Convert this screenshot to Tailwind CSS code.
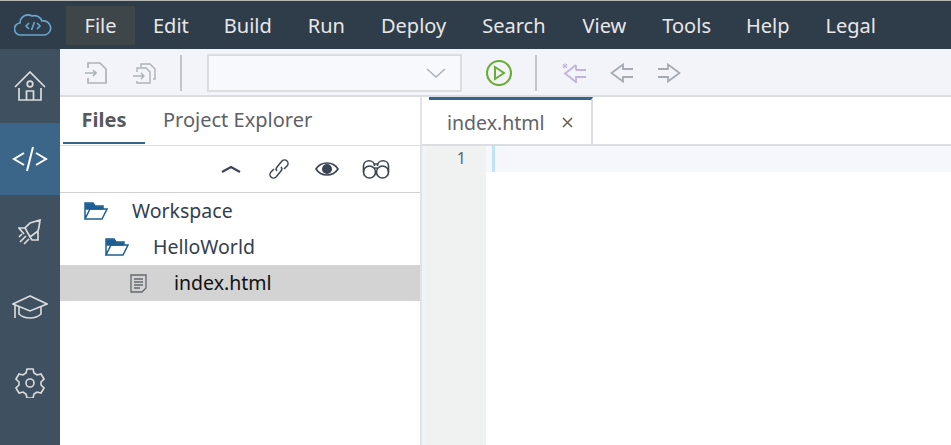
<!doctype html>
<html lang="en">
  <head>
    <meta charset="UTF-8" />
    <title>Web IDE</title>
    <script src="https://cdn.jsdelivr.net/npm/@tailwindcss/browser@4"></script>
  </head>
  <body class="h-[445px] w-[951px] overflow-hidden bg-white font-['Noto_Sans',sans-serif]">
    <div class="flex h-full flex-col">
      <header class="flex h-[49px] shrink-0 items-start border-t border-[#b5b5b5] bg-[#2f3c4a] text-[20px] text-[#e8e8e8]">
        <div class="flex h-[48px] w-[66px] items-center justify-center">
          <svg width="38" height="26" viewBox="0 0 38 26" fill="none" stroke="#6aa6d0" stroke-width="1.6">
            <path d="M9 23H7a6 6 0 0 1-1-12 8 8 0 0 1 12-7 8 8 0 0 1 10 5 7 7 0 0 1 3 14H9z" />
            <path d="M15 11l-3 3 3 3M23 11l3 3-3 3M20.500 10l-3 8" />
          </svg>
        </div>
        <nav class="flex items-start">
          <a class="mt-[5px] flex h-[39px] w-[69px] items-center justify-center bg-[#3e4649]">File</a>
          <a class="mt-[5px] flex h-[39px] items-center pl-[18px]">Edit</a>
          <a class="mt-[5px] flex h-[39px] items-center pl-[35px]">Build</a>
          <a class="mt-[5px] flex h-[39px] items-center pl-[36px]">Run</a>
          <a class="mt-[5px] flex h-[39px] items-center pl-[36px]">Deploy</a>
          <a class="mt-[5px] flex h-[39px] items-center pl-[36px]">Search</a>
          <a class="mt-[5px] flex h-[39px] items-center pl-[37px]">View</a>
          <a class="mt-[5px] flex h-[39px] items-center pl-[36px]">Tools</a>
          <a class="mt-[5px] flex h-[39px] items-center pl-[35px]">Help</a>
          <a class="mt-[5px] flex h-[39px] items-center pl-[36px]">Legal</a>
        </nav>
      </header>
      <div class="flex min-h-0 flex-1">
        <aside class="flex w-[60px] shrink-0 flex-col bg-[#3f5161]">
          <div class="flex h-[74px] items-center justify-center">
            <svg width="32" height="30" viewBox="0 0 32 30" fill="none" stroke="#dcdcdc" stroke-width="1.700">
              <path d="M1 16 16 1l15 15M5 17v12h22V17" />
              <circle cx="16" cy="13" r="2.800" />
              <path d="M12.500 29V20h7v9" />
            </svg>
          </div>
          <div class="flex h-[72px] items-center justify-center bg-[#3c6689]">
            <svg width="36" height="26" viewBox="0 0 36 26" fill="none" stroke="#fff" stroke-width="2">
              <path d="M12 7 2 13l10 6M24 7l10 6-10 6M21 1l-6 24" />
            </svg>
          </div>
          <div class="flex h-[74px] items-center justify-center">
            <svg width="24" height="26" viewBox="0 0 24 26" fill="none" stroke="#dcdcdc" stroke-width="1.700">
              <path d="M22 1 12 4 7 9l5 9 8-6 1-4zM7 9H1l5 6M20 12v9h-6l-2-3M2 23l6-6M6 25l5-5M1 18l3-3" />
            </svg>
          </div>
          <div class="flex h-[76px] items-center justify-center">
            <svg width="36" height="26" viewBox="0 0 36 26" fill="none" stroke="#dcdcdc" stroke-width="1.600">
              <path d="M18 2 1 10l17 7 17-7zM3 11v13M7 13v7c3 3 8 4 11 4s8-1 11-4v-7" />
            </svg>
          </div>
          <div class="flex h-[76px] items-center justify-center">
            <svg width="30" height="30" viewBox="0 0 30 30" fill="none" stroke="#dcdcdc" stroke-width="1.600">
              <path d="M12 1h6l1 4 3 2 4-1 3 5-3 3v3l3 3-3 5-4-1-3 2-1 4h-6l-1-4-3-2-4 1-3-5 3-3v-3L1 11l3-5 4 1 3-2z" />
              <circle cx="15" cy="15" r="4" />
            </svg>
          </div>
        </aside>
        <div class="flex min-w-0 flex-1 flex-col">
          <div class="flex h-[48px] shrink-0 items-center border-b-2 border-[#dcdde3] bg-[#f2f4f9] pt-[2px]">
            <svg class="ml-[25px]" width="22" height="22" viewBox="0 0 22 22" fill="none" stroke="#abb2b9" stroke-width="1.700">
              <path d="M3 6V1h12l6 6v14H3v-5M0 11h11M8 8l3 3-3 3" />
            </svg>
            <svg class="ml-[26px]" width="24" height="21" viewBox="0 0 24 21" fill="none" stroke="#abb2b9" stroke-width="1.400">
              <path d="M4 9V5h9l4 4v11H4v-2M8 4V1h9l5 5v10h-2M0 13h11M8 10l3 3-3 3" />
            </svg>
            <div class="ml-[23px] h-[36px] w-[2px] bg-[#c2c5c9]"></div>
            <div class="ml-[25px] flex h-[38px] w-[255px] items-center justify-end border-2 border-[#dcdde0] bg-[#f7f9fc] pr-[14px]">
              <svg width="20" height="10" viewBox="0 0 20 10" fill="none" stroke="#a9b2bb" stroke-width="1.500"><path d="m1 1 9 8 9-8" /></svg>
            </div>
            <svg class="ml-[24px]" width="26" height="26" viewBox="0 0 26 26" fill="none" stroke="#6cae34" stroke-width="2.200">
              <circle cx="13" cy="13" r="12" />
              <path d="M9 7v12l9-6z" stroke-width="2" />
            </svg>
            <div class="ml-[23px] h-[36px] w-[2px] bg-[#c2c5c9]"></div>
            <svg class="ml-[25px]" width="25" height="20" viewBox="0 0 25 20" fill="none" stroke="#c3b3d9" stroke-width="1.800">
              <path d="M14 2 3 10.500 14 19v-5h10M14 7h10M14 2v5M14 14v5" />
              <path d="M0.500 3h5M3 0.500v5M1 1l4 4M5 1 1 5" stroke-width="1" />
            </svg>
            <svg class="ml-[23px]" width="24" height="20" viewBox="0 0 24 20" fill="none" stroke="#a4abb2" stroke-width="1.800">
              <path d="M23 6H13V1.500L1.500 10 13 18.500V14h10" />
            </svg>
            <svg class="ml-[23px]" width="24" height="20" viewBox="0 0 24 20" fill="none" stroke="#a4abb2" stroke-width="1.800">
              <path d="M1 6h10V1.500L22.500 10 11 18.500V14H1" />
            </svg>
          </div>
          <div class="flex min-h-0 flex-1">
            <section class="flex w-[362px] shrink-0 flex-col border-r-2 border-[#e1e3ea] bg-white">
              <div class="flex h-[49px] items-stretch border-b border-[#dcdde3] pb-[2px] pl-[3px] text-[20px]">
                <div class="relative flex w-[82px] items-center justify-center font-bold text-[#56595d]">
                  Files
                  <div class="absolute right-0 -bottom-px left-0 h-[2px] bg-[#36648b]"></div>
                </div>
                <div class="flex items-center pl-[18px] text-[#5e6166]">Project Explorer</div>
              </div>
              <div class="flex h-[47px] items-center border-b border-[#d0d0d0]">
                <svg class="ml-[161px]" width="20" height="8" viewBox="0 0 20 8" fill="none" stroke="#3a4652" stroke-width="2.200"><path d="M1 7l9-5 9 5" /></svg>
                <svg class="ml-[27px]" width="22" height="22" viewBox="0 0 22 22" fill="none" stroke="#3a4652" stroke-width="1.500">
                  <path d="M9 13a3 3 0 0 1 0-4l5-6a3.500 3.500 0 0 1 5 5l-3 3" />
                  <path d="M13 9a3 3 0 0 1 0 4l-5 6a3.500 3.500 0 0 1-5-5l3-3" />
                </svg>
                <svg class="ml-[25px]" width="24" height="16" viewBox="0 0 24 16" fill="none" stroke="#3a4652" stroke-width="1.700">
                  <path d="M1 8c5-8 17-8 22 0-5 8-17 8-22 0z" />
                  <circle cx="12" cy="8" r="4.200" fill="#3a4652" />
                </svg>
                <svg class="ml-[23px]" width="28" height="20" viewBox="0 0 28 20" fill="none" stroke="#3a4652" stroke-width="1.600">
                  <circle cx="7.500" cy="13" r="6" />
                  <circle cx="20.500" cy="13" r="6" />
                  <path d="M1.500 13V7c0-7 11-7 11 0M26.500 13V7c0-7-11-7-11 0M12.500 5h3M12.500 9h3" />
                </svg>
              </div>
              <div class="flex h-[36px] items-center pl-[24px] text-[19.500px] text-[#32404e]">
                <svg width="24" height="18" viewBox="0 0 24 18" fill="none" stroke="#1d5f92" stroke-width="1.500">
                  <path d="M1 17V1h8l2 3h8v3H6L1 17h17l5-10h-5" />
                  <path d="M2 2h7l2 3h7v2H2z" fill="#1d5f92" />
                </svg>
                <span class="ml-[24px]">Workspace</span>
              </div>
              <div class="flex h-[36px] items-center pl-[45px] text-[19.500px] text-[#32404e]">
                <svg width="24" height="18" viewBox="0 0 24 18" fill="none" stroke="#1d5f92" stroke-width="1.500">
                  <path d="M1 17V1h8l2 3h8v3H6L1 17h17l5-10h-5" />
                  <path d="M2 2h7l2 3h7v2H2z" fill="#1d5f92" />
                </svg>
                <span class="ml-[24px]">HelloWorld</span>
              </div>
              <div class="flex h-[36px] items-center bg-[#d3d3d3] pl-[70px] text-[19.500px] text-[#111]">
                <svg width="17" height="19" viewBox="0 0 17 19" fill="none" stroke="#64686d" stroke-width="1.300">
                  <path d="M1 1h15v13l-4 4H1zM4 5h9M4 8h9M4 11h9M4 14h6" />
                </svg>
                <span class="ml-[27px]">index.html</span>
              </div>
            </section>
            <section class="flex min-w-0 flex-1 flex-col">
              <div class="flex h-[49px] shrink-0 border-b-2 border-[#dcdde3] pl-[7px]">
                <div class="flex w-[164px] items-center border-t-[3px] border-r-2 border-t-[#36648b] border-r-[#dcdde3] pt-[1px] pl-[18px] text-[19.500px] text-[#5f6368]">
                  index.html
                  <svg class="ml-[17px]" width="11" height="11" viewBox="0 0 11 11" fill="none" stroke="#6b5b4e" stroke-width="1.500"><path d="m1 1 9 9M10 1l-9 9" /></svg>
                </div>
              </div>
              <div class="flex min-h-0 flex-1 bg-[#f0f3f8] pl-[4px]">
                <div class="w-[60px] bg-[#f0f2f2] pr-[20px] text-right text-[16px] leading-[24px] text-[#5b6570]">1</div>
                <div class="min-w-0 flex-1 bg-white">
                  <div class="h-[26px] bg-[#f5f7fc] pl-[6px]"><div class="h-full w-[3px] bg-[#bfe3f5]"></div></div>
                </div>
              </div>
            </section>
          </div>
        </div>
      </div>
    </div>
  </body>
</html>
